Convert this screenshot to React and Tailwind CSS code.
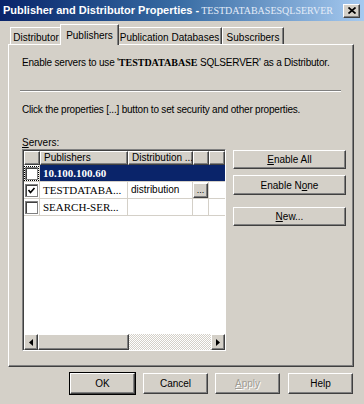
import React from "react";

const raised =
  "border border-t-white border-l-white border-r-[#404040] border-b-[#404040] shadow-[inset_-1px_-1px_0_#808080]";

function Checkbox({ checked }) {
  return (
    <div className="flex h-[13px] w-[13px] shrink-0 items-center justify-center border border-[#808080] bg-white shadow-[inset_1px_1px_0_#404040]">
      {checked ? (
        <svg width="9" height="9" viewBox="0 0 9 9">
          <path d="M1.5 4 L3.5 6.5 L7.5 2" fill="none" stroke="#000" strokeWidth="1.6" />
        </svg>
      ) : null}
    </div>
  );
}

function Tab({ label, selected, w }) {
  if (selected) {
    return (
      <div
        className={`relative z-10 -mx-[2px] -mb-px flex h-[21px] shrink-0 items-start justify-center whitespace-nowrap border border-b-0 border-t-white border-l-white border-r-[#404040] bg-[#d4d0c8] pt-[3px] shadow-[inset_-1px_0_0_#808080] ${w}`}
      >
        {label}
      </div>
    );
  }
  return (
    <div
      className={`flex h-[17px] shrink-0 items-start justify-center whitespace-nowrap border border-b-0 border-t-white border-l-white border-r-[#404040] pt-[2px] shadow-[inset_-1px_0_0_#808080] ${w}`}
    >
      {label}
    </div>
  );
}

function Btn({ children, className = "", disabled, def }) {
  return (
    <div
      className={`flex shrink-0 items-center justify-center ${def ? "outline outline-1 outline-black" : ""} ${raised} ${disabled ? "text-[#a09c94] [text-shadow:1px_1px_0_#fff]" : ""} ${className}`}
    >
      {children}
    </div>
  );
}

const rows = [
  { name: "10.100.100.60", dist: "", checked: false, selected: true },
  { name: "TESTDATABA...", dist: "distribution", checked: true, btn: true },
  { name: "SEARCH-SER...", dist: "", checked: false }
];

export default function App() {
  return (
    <div className="flex h-[404px] w-[364px] flex-col overflow-hidden bg-[#d4d0c8] font-['Liberation_Sans',sans-serif] text-[10px] text-black">
      {/* title bar */}
      <div className="flex h-[21px] shrink-0 items-center bg-gradient-to-r from-[#0a246a] via-[#3a6ea5] to-[#a6caf0] pl-[3px] pr-[4px]">
        <span className="whitespace-nowrap text-[11px] font-bold text-white">Publisher and Distributor Properties -</span>
        <span className="ml-[2px] whitespace-nowrap font-['Liberation_Serif',serif] text-[10px] text-[#e4ecf8]">
          TESTDATABASESQLSERVER
        </span>
        <div className={`ml-auto flex h-[14px] w-[17px] items-center justify-center bg-[#d4d0c8] ${raised}`}>
          <svg width="8" height="7" viewBox="0 0 8 7">
            <path d="M0.5 0.5 L7.5 6.5 M7.5 0.5 L0.5 6.5" stroke="#000" strokeWidth="1.7" />
          </svg>
        </div>
      </div>

      {/* tabs */}
      <div className="mt-[6px] flex h-[17px] shrink-0 items-end pl-[10px]">
        <Tab label="Distributor" w="w-[52px]" />
        <Tab label="Publishers" selected w="w-[59px]" />
        <Tab label="Publication Databases" w="w-[105px]" />
        <Tab label="Subscribers" w="w-[62px]" />
      </div>

      {/* panel */}
      <div className="ml-[8px] flex h-[323px] w-[346px] shrink-0 flex-col border border-t-white border-l-white border-r-[#404040] border-b-[#404040] pl-[13px] shadow-[inset_-1px_-1px_0_#808080]">
        <div className="mt-[11px] h-[13px] whitespace-nowrap leading-[13px] tracking-[-0.2px]">
          Enable servers to use '
          <span className="font-['Liberation_Serif',serif] text-[10px] font-bold tracking-normal">TESTDATABASE</span>{" "}
          SQLSERVER' as a Distributor.
        </div>
        <div className="-ml-[2px] mt-[21px] h-[2px] w-[321px] border-t border-t-[#808080] border-b border-b-white" />
        <div className="mt-[11px] h-[13px] whitespace-nowrap leading-[13px] tracking-[-0.2px]">
          Click the properties [...] button to set security and other properties.
        </div>
        <div className="mt-[20px] h-[13px] leading-[13px]">
          <span className="underline">S</span>ervers:
        </div>

        <div className="flex">
          {/* grid */}
          <div className="flex h-[202px] w-[204px] shrink-0 flex-col border border-t-[#808080] border-l-[#808080] border-r-white border-b-white shadow-[inset_1px_1px_0_#404040]">
            <div className="ml-px mt-px flex h-[200px] w-[201px] flex-col bg-white">
              <div className="flex h-[14px] shrink-0">
                <div className={`h-[14px] w-[16px] shrink-0 bg-[#d4d0c8] ${raised}`} />
                <div className={`h-[14px] w-[88px] shrink-0 bg-[#d4d0c8] pl-[3px] leading-[12px] ${raised}`}>Publishers</div>
                <div className={`h-[14px] w-[65px] shrink-0 overflow-hidden whitespace-nowrap bg-[#d4d0c8] pl-[3px] leading-[12px] ${raised}`}>
                  Distribution ...
                </div>
                <div className={`h-[14px] w-[16px] shrink-0 bg-[#d4d0c8] ${raised}`} />
                <div className={`h-[14px] w-[16px] shrink-0 bg-[#d4d0c8] ${raised}`} />
              </div>
              {rows.map((r) => (
                <div key={r.name} className="flex h-[17px] shrink-0 border-b border-b-[#d4d0c8]">
                  <div className="flex w-[16px] shrink-0 items-center justify-center border-r border-r-[#d4d0c8]">
                    <div className={r.selected ? "outline outline-1 outline-dotted outline-black" : ""}>
                      <Checkbox checked={r.checked} />
                    </div>
                  </div>
                  <div className={`flex flex-1 ${r.selected ? "bg-[#0a246a] text-white" : ""}`}>
                    <div
                      className={`w-[88px] shrink-0 whitespace-nowrap pl-[3px] font-['Liberation_Serif',serif] text-[11px] leading-[16px] ${r.selected ? "font-bold" : "border-r border-r-[#d4d0c8]"}`}
                    >
                      {r.name}
                    </div>
                    <div
                      className={`w-[65px] shrink-0 pl-[3px] text-[10px] leading-[16px] ${r.selected ? "" : "border-r border-r-[#d4d0c8]"}`}
                    >
                      {r.dist}
                    </div>
                    <div className={`flex w-[16px] shrink-0 items-center ${r.selected ? "" : "border-r border-r-[#d4d0c8]"}`}>
                      {r.btn ? (
                        <div className={`flex h-[15px] w-[16px] items-end justify-center bg-[#d4d0c8] pb-[2px] text-[9px] leading-[9px] ${raised}`}>
                          ...
                        </div>
                      ) : null}
                    </div>
                  </div>
                </div>
              ))}
              <div className="flex-1" />
              {/* scrollbar */}
              <div className="flex h-[16px] shrink-0">
                <div className={`flex h-[16px] w-[14px] shrink-0 items-center justify-center bg-[#d4d0c8] ${raised}`}>
                  <svg width="4" height="7" viewBox="0 0 4 7">
                    <path d="M4 0 L0 3.5 L4 7 Z" fill="#000" />
                  </svg>
                </div>
                <div className={`h-[16px] w-[91px] shrink-0 bg-[#d4d0c8] ${raised}`} />
                <div className="h-[16px] flex-1 bg-[repeating-conic-gradient(#ffffff_0_25%,#d4d0c8_0_50%)] bg-[length:2px_2px]" />
                <div className={`flex h-[16px] w-[14px] shrink-0 items-center justify-center bg-[#d4d0c8] ${raised}`}>
                  <svg width="4" height="7" viewBox="0 0 4 7">
                    <path d="M0 0 L4 3.5 L0 7 Z" fill="#000" />
                  </svg>
                </div>
              </div>
            </div>
          </div>

          {/* side buttons */}
          <div className="ml-[7px] mt-[1px] flex w-[113px] flex-col">
            <Btn className="h-[19px]">
              <span>
                <span className="underline">E</span>nable All
              </span>
            </Btn>
            <Btn className="mt-[6px] h-[20px]">
              <span>
                Enable N<span className="underline">o</span>ne
              </span>
            </Btn>
            <Btn className="mt-[12px] h-[19px]">
              <span>
                <span className="underline">N</span>ew...
              </span>
            </Btn>
          </div>
        </div>
      </div>

      {/* bottom buttons */}
      <div className="mt-[6px] flex pl-[70px]">
        <Btn def className="h-[21px] w-[65px]">OK</Btn>
        <Btn className="ml-[8px] h-[21px] w-[65px]">Cancel</Btn>
        <Btn disabled className="ml-[7px] h-[21px] w-[65px]">
          <span>
            <span className="underline">A</span>pply
          </span>
        </Btn>
        <Btn className="ml-[8px] h-[21px] w-[65px]">Help</Btn>
      </div>
    </div>
  );
}
